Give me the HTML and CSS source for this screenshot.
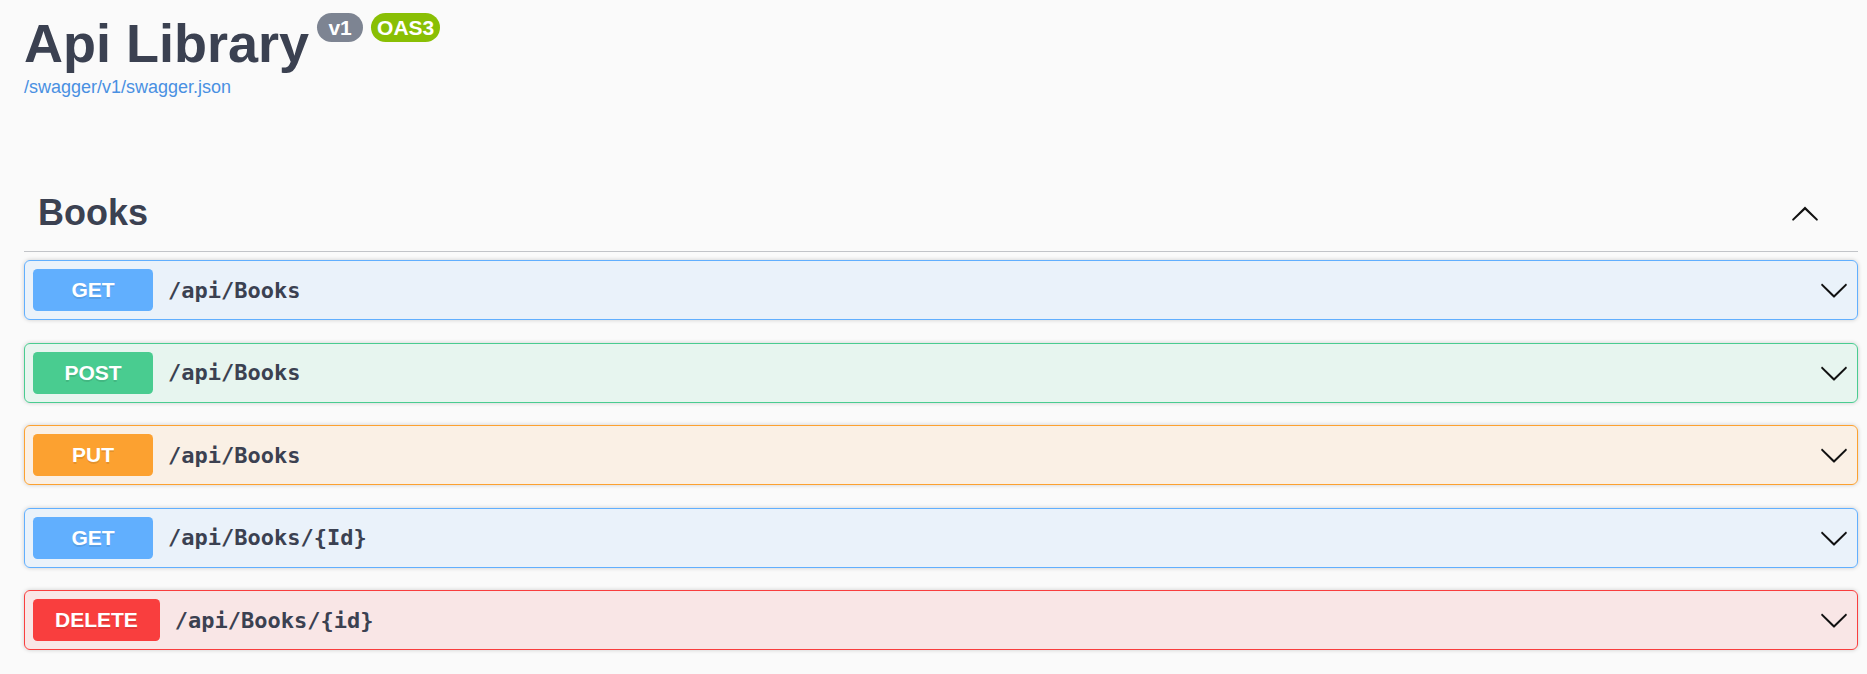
FILE: index.html
```html
<!DOCTYPE html>
<html lang="en">
<head>
<meta charset="utf-8">
<title>Api Library</title>
<link rel="stylesheet" href="styles.css">
</head>
<body>
<div class="wrapper">
  <section class="info">
    <div class="title-row">
      <h2 class="title">Api Library</h2>
      <span class="badge badge-version">v1</span>
      <span class="badge badge-oas">OAS3</span>
    </div>
    <a class="spec-link" href="#">/swagger/v1/swagger.json</a>
  </section>

  <section class="tag-section">
    <h3 class="tag-header">
      <span class="tag-name">Books</span>
      <svg class="arrow" viewBox="0 0 20 20" width="30" height="30" aria-hidden="true"><path d="M17.418 14.908c.272.268.709.268.979 0s.271-.701 0-.969l-7.908-7.83c-.27-.268-.707-.268-.979 0l-7.908 7.830c-.27.268-.27.701 0 .969.271.268.709.268.979 0L10 7.767l7.418 7.141z"/></svg>
    </h3>

    <div class="opblock op-get">
      <span class="method">GET</span>
      <span class="path">/api/Books</span>
      <svg class="arrow" viewBox="0 0 20 20" width="30" height="30" aria-hidden="true"><path d="M17.418 6.109c.272-.268.709-.268.979 0s.271.701 0 .969l-7.908 7.83c-.27.268-.707.268-.979 0l-7.908-7.83c-.27-.268-.27-.701 0-.969.271-.268.709-.268.979 0L10 13.25l7.418-7.141z"/></svg>
    </div>
    <div class="opblock op-post">
      <span class="method">POST</span>
      <span class="path">/api/Books</span>
      <svg class="arrow" viewBox="0 0 20 20" width="30" height="30" aria-hidden="true"><path d="M17.418 6.109c.272-.268.709-.268.979 0s.271.701 0 .969l-7.908 7.83c-.27.268-.707.268-.979 0l-7.908-7.83c-.27-.268-.27-.701 0-.969.271-.268.709-.268.979 0L10 13.25l7.418-7.141z"/></svg>
    </div>
    <div class="opblock op-put">
      <span class="method">PUT</span>
      <span class="path">/api/Books</span>
      <svg class="arrow" viewBox="0 0 20 20" width="30" height="30" aria-hidden="true"><path d="M17.418 6.109c.272-.268.709-.268.979 0s.271.701 0 .969l-7.908 7.83c-.27.268-.707.268-.979 0l-7.908-7.83c-.27-.268-.27-.701 0-.969.271-.268.709-.268.979 0L10 13.25l7.418-7.141z"/></svg>
    </div>
    <div class="opblock op-get">
      <span class="method">GET</span>
      <span class="path">/api/Books/{Id}</span>
      <svg class="arrow" viewBox="0 0 20 20" width="30" height="30" aria-hidden="true"><path d="M17.418 6.109c.272-.268.709-.268.979 0s.271.701 0 .969l-7.908 7.83c-.27.268-.707.268-.979 0l-7.908-7.83c-.27-.268-.27-.701 0-.969.271-.268.709-.268.979 0L10 13.25l7.418-7.141z"/></svg>
    </div>
    <div class="opblock op-delete">
      <span class="method">DELETE</span>
      <span class="path">/api/Books/{id}</span>
      <svg class="arrow" viewBox="0 0 20 20" width="30" height="30" aria-hidden="true"><path d="M17.418 6.109c.272-.268.709-.268.979 0s.271.701 0 .969l-7.908 7.83c-.27.268-.707.268-.979 0l-7.908-7.83c-.27-.268-.27-.701 0-.969.271-.268.709-.268.979 0L10 13.25l7.418-7.141z"/></svg>
    </div>
  </section>
</div>
</body>
</html>
```
FILE: styles.css
```css
* { box-sizing: border-box; }

html, body {
  margin: 0;
  padding: 0;
  background: #fafafa;
}

body {
  font-family: "Liberation Sans", Arial, sans-serif;
  color: #3b4151;
}

.wrapper {
  padding: 12px 9px 0 24px;
}

.info {
  display: flex;
  flex-direction: column;
  align-items: flex-start;
}

.title-row {
  display: flex;
  align-items: flex-start;
}

.title {
  margin: 0;
  font-size: 54px;
  line-height: 62px;
  font-weight: 700;
  color: #3b4151;
}

.badge {
  margin-top: 1px;
  margin-left: 8px;
  height: 29px;
  padding: 0 6px;
  border-radius: 86px;
  color: #fff;
  font-size: 21px;
  font-weight: 700;
  line-height: 29px;
  text-align: center;
}

.badge-version {
  min-width: 46px;
  background: #7d8492;
}

.badge-oas {
  background: #89bf04;
}

.spec-link {
  margin-top: 3px;
  font-size: 18px;
  line-height: 21px;
  color: #4990e2;
  text-decoration: none;
}

.tag-section {
  margin-top: 79px;
}

.tag-header {
  display: flex;
  align-items: center;
  justify-content: space-between;
  margin: 0 0 8px;
  padding: 15px 38px 18px 14px;
  border-bottom: 1px solid #c2c4c8;
  font-size: 36px;
  line-height: 41px;
  font-weight: 700;
  color: #3b4151;
}

.arrow {
  display: block;
  flex: none;
  fill: #111;
}

.opblock {
  display: flex;
  align-items: center;
  margin-bottom: 22.5px;
  padding: 8px;
  border: 1px solid #61affe;
  border-radius: 6px;
  box-shadow: 0 0 4px rgba(0, 0, 0, 0.19);
}

.method {
  flex: none;
  min-width: 120px;
  padding: 9px 22px;
  border-radius: 4.5px;
  color: #fff;
  font-size: 21px;
  line-height: 24px;
  font-weight: 700;
  text-align: center;
  text-shadow: 0 1.5px 0 rgba(0, 0, 0, 0.1);
}

.path {
  flex: 1;
  padding: 0 15px;
  font-family: "DejaVu Sans Mono", "Liberation Mono", monospace;
  font-size: 22px;
  font-weight: 700;
  color: #3b4151;
}

.op-get { border-color: #61affe; background: rgba(97, 175, 254, 0.1); }
.op-get .method { background: #61affe; }

.op-post { border-color: #49cc90; background: rgba(73, 204, 144, 0.1); }
.op-post .method { background: #49cc90; }

.op-put { border-color: #fca130; background: rgba(252, 161, 48, 0.1); }
.op-put .method { background: #fca130; }

.op-delete { border-color: #f93e3e; background: rgba(249, 62, 62, 0.1); }
.op-delete .method { background: #f93e3e; }
```
